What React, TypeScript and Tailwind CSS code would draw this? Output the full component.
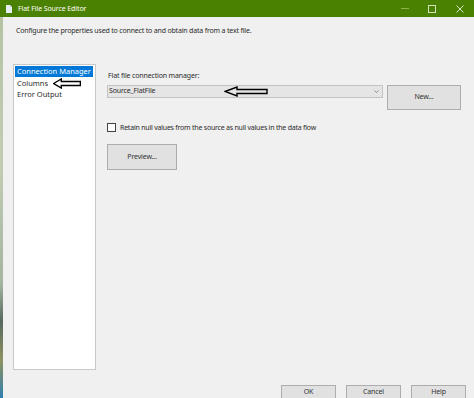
import React from 'react'

const LeftArrow = ({ className }: { className: string }) => (
  <svg className={className} viewBox="0 0 44 11" fill="none" preserveAspectRatio="none">
    <polygon
      points="1,5.5 13,1 13,3.5 43,3.5 43,7.5 13,7.5 13,10"
      stroke="#000"
      strokeWidth="1.4"
      strokeLinejoin="miter"
      vectorEffect="non-scaling-stroke"
    />
  </svg>
)

const Btn = ({ label, className }: { label: string; className: string }) => (
  <div
    className={`flex items-center justify-center bg-[#e1e1e1] border border-[#adadad] text-[7px] tracking-[-0.15px] text-[#333] ${className}`}
  >
    {label}
  </div>
)

const App = () => {
  return (
    <div className="w-[474px] h-[398px] overflow-hidden flex flex-col bg-[#f0f0f0] font-['Noto_Sans',sans-serif] text-[#2b2b2b]">
      {/* title bar */}
      <div className="h-[17px] shrink-0 bg-[#4b8100] flex items-center text-white">
        <svg className="ml-[6px] w-[6px] h-[8px]" viewBox="0 0 6 8">
          <path d="M0 0H4L6 2V8H0Z" fill="#e8eef5" />
          <path d="M4 0V2H6" fill="#b9c6d4" />
        </svg>
        <span className="ml-[6px] text-[7px] tracking-[-0.1px] leading-none">Flat File Source Editor</span>
        <div className="ml-auto flex items-center h-full">
          <div className="w-[8px] h-px bg-[#8fb24f] mr-[19px]" />
          <div className="w-[8px] h-[8px] border border-[#d4e3bb] mr-[20px]" />
          <svg className="w-[8px] h-[8px] mr-[10px]" viewBox="0 0 8 8">
            <path d="M0.5 0.5L7.5 7.5M7.5 0.5L0.5 7.5" stroke="#e4eed6" strokeWidth="0.9" />
          </svg>
        </div>
      </div>

      <div className="flex flex-1 min-h-0">
        {/* desktop sliver */}
        <div className="w-[3px] shrink-0 bg-[linear-gradient(180deg,#b5c3a3_0%,#c2ccb3_40%,#a3b4a0_70%,#57685e_80%,#8e9260_90%,#2f7fb0_100%)]" />

        <div className="flex-1 flex flex-col">
          <p className="mt-[9px] ml-[13px] text-[7px] tracking-[-0.18px] leading-[10px]">
            Configure the properties used to connect to and obtain data from a text file.
          </p>

          <div className="flex mt-[28px]">
            {/* page list */}
            <div className="relative ml-[10px] w-[83px] h-[306px] bg-white border border-[#c8c8c8] pt-[1px] px-[1px] text-[7.5px] leading-[11px] whitespace-nowrap">
              <div className="bg-[#0078d7] text-white w-fit px-[2px] leading-[11px]">Connection Manager</div>
              <div className="pl-[2px] mt-[1px]">Columns</div>
              <div className="pl-[2px]">Error Output</div>
              <LeftArrow className="absolute left-[39px] top-[13px] w-[28px] h-[11px]" />
            </div>

            {/* right panel */}
            <div className="ml-[11px] flex flex-col">
              <div className="text-[7px] tracking-[-0.15px] leading-[10px] ml-[1px] mt-[7px]">Flat file connection manager:</div>
              <div className="flex items-start mt-[4px]">
                <div className="relative w-[276px] h-[13px] bg-[#e5e5e5] border border-[#c3c3c3] flex items-center text-[7px] tracking-[-0.15px] pl-[1px]">
                  Source_FlatFile
                  <svg className="absolute right-[3px] top-[4px] w-[5px] h-[3px]" viewBox="0 0 5 3">
                    <path d="M0.5 0.5L2.5 2.5L4.5 0.5" stroke="#777" strokeWidth="0.8" fill="none" />
                  </svg>
                  <LeftArrow className="absolute left-[116px] top-[0px] w-[44px] h-[11px]" />
                </div>
                <Btn label="New..." className="ml-[4px] w-[74px] h-[25px]" />
              </div>

              <div className="flex items-center mt-[13px]">
                <div className="w-[9px] h-[9px] bg-white border border-[#444]" />
                <span className="ml-[4px] text-[7px] tracking-[-0.22px] leading-none">
                  Retain null values from the source as null values in the data flow
                </span>
              </div>

              <Btn label="Preview..." className="mt-[12px] w-[70px] h-[26px]" />
            </div>
          </div>

          <div className="mt-[6px] ml-[9px] mr-[8px] h-px bg-[#d9d9d9]" />

          <div className="flex justify-end mt-[9px] mr-[8px] gap-[10px]">
            <Btn label="OK" className="w-[55px] h-[14px] border-b-0 border-[#0078d7]" />
            <Btn label="Cancel" className="w-[55px] h-[14px] border-b-0" />
            <Btn label="Help" className="w-[55px] h-[14px] border-b-0" />
          </div>
        </div>
      </div>
    </div>
  )
}

export default App
